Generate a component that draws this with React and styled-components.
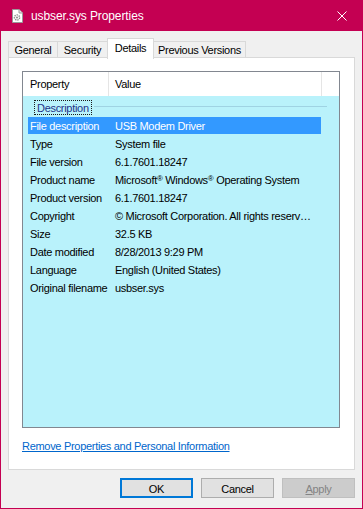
import React from "react";
import styled, { createGlobalStyle } from "styled-components";

const GlobalStyle = createGlobalStyle`
  html, body { margin: 0; padding: 0; background: #ffffff; }
  body { font-family: "Liberation Sans", Arial, sans-serif; font-size: 11px; }
  * { box-sizing: border-box; }
`;

const Window = styled.div`
  width: 363px;
  height: 509px;
  border: 1px solid #c40052;
  border-top: none;
  background: #f0f0f0;
  display: flex;
  flex-direction: column;
  color: #000;
  letter-spacing: -0.3px;
`;

const TitleBar = styled.div`
  height: 31px;
  margin: 0 -1px;
  background: #c40052;
  display: flex;
  align-items: center;
  padding-left: 12px;
  color: #ffffff;
  flex-shrink: 0;
`;

const TitleText = styled.span`
  margin-left: 8px;
  font-size: 12px;
  letter-spacing: -0.1px;
  flex: 1;
`;

const CloseBox = styled.div`
  width: 46px;
  height: 31px;
  display: flex;
  align-items: center;
  justify-content: center;
  padding-left: 3px;
`;

const Body = styled.div`
  flex: 1;
  display: flex;
  flex-direction: column;
  padding: 7px 7px 0 7px;
`;

const TabStrip = styled.div`
  display: flex;
  align-items: flex-end;
  height: 20px;
  position: relative;
  z-index: 1;
  margin-bottom: -1px;
`;

const Tab = styled.div`
  width: ${(p) => p.$w}px;
  height: ${(p) => (p.$active ? 21 : 17)}px;
  margin-left: ${(p) => (p.$first ? 0 : -1)}px;
  margin-top: ${(p) => (p.$active ? 0 : 3)}px;
  align-self: flex-start;
  border: 1px solid #d9d9d9;
  border-bottom: ${(p) => (p.$active ? "none" : "1px solid #d9d9d9")};
  background: ${(p) => (p.$active ? "#ffffff" : "#f0f0f0")};
  display: flex;
  align-items: ${(p) => (p.$active ? "flex-start" : "center")};
  padding-top: ${(p) => (p.$active ? 3 : 1)}px;
  justify-content: center;
  font-size: 11px;
  white-space: nowrap;
  position: relative;
  z-index: ${(p) => (p.$active ? 2 : 1)};
`;

const Page = styled.div`
  width: 347px;
  height: 413px;
  border: 1px solid #d9d9d9;
  background: #ffffff;
  padding: 13px 0 0 13px;
  display: flex;
  flex-direction: column;
`;

const ListBox = styled.div`
  width: 318px;
  height: 357px;
  border: 1px solid #828790;
  background: #b9f2fb;
  display: flex;
  flex-direction: column;
  overflow: hidden;
`;

const Header = styled.div`
  height: 24px;
  background: #ffffff;
  display: flex;
  flex-shrink: 0;
`;

const HeaderCell = styled.div`
  width: ${(p) => (p.$w ? `${p.$w}px` : "auto")};
  flex: ${(p) => (p.$w ? "none" : 1)};
  border-right: ${(p) => (p.$w ? "1px solid #e5e5e5" : "none")};
  padding-left: ${(p) => p.$pad || 0}px;
  display: flex;
  align-items: center;
`;

const GroupRow = styled.div`
  height: 21px;
  display: flex;
  align-items: center;
  padding: 0 12px 0 11px;
  flex-shrink: 0;
`;

const GroupLabel = styled.span`
  border: 1px dotted #1a1a1a;
  padding: 0 2px 0 2px;
  height: 15px;
  line-height: 14px;
  color: #1e3287;
  margin-top: 1px;
`;

const GroupLine = styled.div`
  flex: 1;
  height: 1px;
  background: #9fd3e3;
  margin-left: 2px;
`;

const Row = styled.div`
  width: 293px;
  height: 17px;
  margin: 0 0 1px 5px;
  padding-top: 1px;
  display: flex;
  align-items: center;
  background: ${(p) => (p.$selected ? "#3399ff" : "transparent")};
  color: ${(p) => (p.$selected ? "#ffffff" : "#000000")};
  flex-shrink: 0;
`;

const PropCell = styled.div`
  width: 80px;
  padding-left: 2px;
  white-space: nowrap;
  flex-shrink: 0;
`;

const ValueCell = styled.div`
  flex: 1;
  padding-left: 7px;
  padding-right: 8px;
  white-space: nowrap;
  overflow: hidden;
  text-overflow: ellipsis;
`;

const Reg = styled.sup`
  font-size: 8px;
  vertical-align: 3px;
  line-height: 0;
`;

const LinkText = styled.a`
  margin-top: 12px;
  color: #0066cc;
  text-decoration: underline;
  font-size: 11px;
  align-self: flex-start;
  cursor: pointer;
`;

const ButtonRow = styled.div`
  display: flex;
  justify-content: flex-end;
  gap: 8px;
  padding-top: 8px;
`;

const Button = styled.div`
  width: 73px;
  height: 20px;
  display: flex;
  align-items: center;
  justify-content: center;
  padding-top: 1px;
  background: ${(p) => (p.$disabled ? "#cccccc" : "#e1e1e1")};
  border: ${(p) =>
    p.$default ? "2px solid #0078d7" : p.$disabled ? "1px solid #bfbfbf" : "1px solid #adadad"};
  color: ${(p) => (p.$disabled ? "#838383" : "#000000")};
  font-size: 11px;
`;

const AccessKey = styled.span`
  text-decoration: underline;
`;

const FileIcon = () => (
  <svg width="11" height="14" viewBox="0 0 11 14">
    <path d="M0.5 0.5 H7 L10.5 4 V13.5 H0.5 Z" fill="#ffffff" stroke="#9a9a9a" />
    <path d="M7 0.5 V4 H10.5" fill="#e6e6e6" stroke="#9a9a9a" />
    <circle cx="5" cy="8.5" r="2.6" fill="none" stroke="#8a8a8a" strokeWidth="1.4" strokeDasharray="1.4 0.9" />
    <circle cx="5" cy="8.5" r="1" fill="#8a8a8a" />
  </svg>
);

const CloseIcon = () => (
  <svg width="10" height="10" viewBox="0 0 10 10">
    <path d="M0.5 0.5 L9.5 9.5 M9.5 0.5 L0.5 9.5" stroke="#ffffff" strokeWidth="1" />
  </svg>
);

const rows = [
  ["File description", "USB Modem Driver"],
  ["Type", "System file"],
  ["File version", "6.1.7601.18247"],
  ["Product name", <>Microsoft<Reg>®</Reg> Windows<Reg>®</Reg> Operating System</>],
  ["Product version", "6.1.7601.18247"],
  ["Copyright", "© Microsoft Corporation. All rights reserved."],
  ["Size", "32.5 KB"],
  ["Date modified", "8/28/2013 9:29 PM"],
  ["Language", "English (United States)"],
  ["Original filename", "usbser.sys"],
];

const tabs = [
  { label: "General", w: 50 },
  { label: "Security", w: 51 },
  { label: "Details", w: 47, active: true },
  { label: "Previous Versions", w: 93 },
];

export default function App() {
  return (
    <>
      <GlobalStyle />
      <Window>
        <TitleBar>
          <FileIcon />
          <TitleText>usbser.sys Properties</TitleText>
          <CloseBox>
            <CloseIcon />
          </CloseBox>
        </TitleBar>
        <Body>
          <TabStrip>
            {tabs.map((t, i) => (
              <Tab key={t.label} $w={t.w} $active={t.active} $first={i === 0}>
                {t.label}
              </Tab>
            ))}
          </TabStrip>
          <Page>
            <ListBox>
              <Header>
                <HeaderCell $w={86} $pad={7}>Property</HeaderCell>
                <HeaderCell $w={213} $pad={6}>Value</HeaderCell>
                <HeaderCell />
              </Header>
              <GroupRow>
                <GroupLabel>Description</GroupLabel>
                <GroupLine />
              </GroupRow>
              {rows.map(([k, v], i) => (
                <Row key={k} $selected={i === 0}>
                  <PropCell>{k}</PropCell>
                  <ValueCell>{v}</ValueCell>
                </Row>
              ))}
            </ListBox>
            <LinkText>Remove Properties and Personal Information</LinkText>
          </Page>
          <ButtonRow>
            <Button $default>OK</Button>
            <Button>Cancel</Button>
            <Button $disabled>
              <AccessKey>A</AccessKey>pply
            </Button>
          </ButtonRow>
        </Body>
      </Window>
    </>
  );
}
